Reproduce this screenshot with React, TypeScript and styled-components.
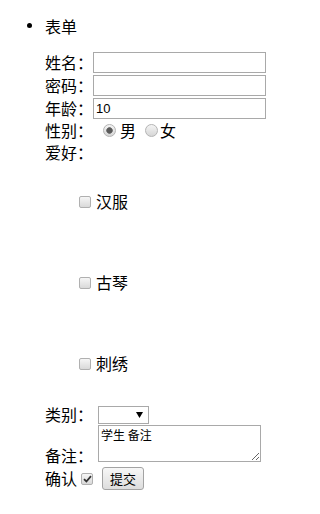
import React from "react";
import styled, { createGlobalStyle } from "styled-components";

const Global = createGlobalStyle`
  html, body { margin: 0; padding: 0; background: #fff; }
  body {
    font-family: "Noto Sans CJK SC", "Microsoft YaHei", sans-serif;
    font-size: 16px;
    color: #000;
  }
`;

const Page = styled.div`
  padding: 14px 0 24px 27px;
`;

const TitleRow = styled.div`
  display: flex;
  align-items: center;
  height: 23px;
  gap: 13px;
`;

const Bullet = styled.span`
  width: 5px;
  height: 5px;
  border-radius: 50%;
  background: #000;
  flex: none;
`;

const Form = styled.form`
  margin: 14px 0 0 18px;
  display: flex;
  flex-direction: column;
`;

const Row = styled.div<{ $h?: number; $align?: string }>`
  display: flex;
  align-items: ${(p) => p.$align || "center"};
  height: ${(p) => p.$h ?? 23}px;
  line-height: ${(p) => Math.min(p.$h ?? 23, 23)}px;
`;

const Label = styled.span`
  width: 48px;
  flex: none;
  white-space: nowrap;
  line-height: inherit;
`;

const TextInput = styled.input`
  box-sizing: border-box;
  width: 173px;
  height: 21px;
  border: 1px solid #a9a9a9;
  padding: 1px 2px;
  margin: 0;
  font-family: "Liberation Sans", Arial, sans-serif;
  font-size: 13px;
  color: #000;
  background: #fff;
  outline: none;
`;

const ChoiceGroup = styled.div<{ $pl?: number }>`
  display: flex;
  align-items: center;
  padding-left: ${(p) => p.$pl ?? 0}px;
`;

const Radio = styled.span<{ $checked?: boolean }>`
  box-sizing: border-box;
  width: 13px;
  height: 13px;
  border-radius: 50%;
  border: 1px solid #b4b4b4;
  background: ${(p) =>
    p.$checked
      ? "radial-gradient(circle, #5a5a5a 0 2.5px, #7a7a7a 3px, transparent 3.6px), linear-gradient(#f4f4f4, #d6d6d6)"
      : "linear-gradient(#f4f4f4, #d6d6d6)"};
  flex: none;
`;

const ChoiceText = styled.span<{ $ml?: number; $mr?: number }>`
  margin-left: ${(p) => p.$ml ?? 0}px;
  margin-right: ${(p) => p.$mr ?? 0}px;
  line-height: inherit;
`;

const Box = styled.span<{ $ml?: number }>`
  box-sizing: border-box;
  width: 12px;
  height: 12px;
  margin-left: ${(p) => p.$ml ?? 0}px;
  border: 1px solid #b0b0b0;
  border-radius: 2px;
  background: linear-gradient(#f6f6f6, #d9d9d9);
  flex: none;
  display: flex;
  align-items: center;
  justify-content: center;
`;

const HobbyList = styled.div`
  display: flex;
  flex-direction: column;
  gap: 58px;
  padding: 27px 0 28px 34px;
`;

const HobbyItem = styled.label`
  display: flex;
  align-items: center;
  gap: 5px;
  height: 23px;
  line-height: 23px;
`;

const SelectBox = styled.div`
  box-sizing: border-box;
  width: 51px;
  height: 18px;
  margin-left: 5px;
  margin-top: 3px;
  border: 1px solid #a9a9a9;
  background: #fff;
  display: flex;
  align-items: center;
  justify-content: flex-end;
  padding-right: 5px;
`;

const Notes = styled.textarea`
  box-sizing: border-box;
  width: 163px;
  height: 37px;
  margin: 0 0 5px 5px;
  padding: 1px 2px;
  border: 1px solid #a9a9a9;
  font-family: "Noto Sans CJK SC", "Microsoft YaHei", sans-serif;
  font-size: 12px;
  line-height: 15px;
  color: #000;
  resize: both;
  outline: none;
`;

const ConfirmText = styled.span`
  line-height: 23px;
`;

const SubmitButton = styled.button`
  box-sizing: border-box;
  width: 42px;
  height: 23px;
  margin-left: 9px;
  padding: 0;
  border: 1px solid #a3a3a3;
  border-radius: 3px;
  background: linear-gradient(#f7f7f7, #dddddd);
  font-family: "Noto Sans CJK SC", "Microsoft YaHei", sans-serif;
  font-size: 13px;
  color: #000;
`;

const CheckMark = () => (
  <svg width="9" height="8" viewBox="0 0 9 8">
    <path d="M1 4.2 L3.4 6.5 L8 1.2" fill="none" stroke="#333" strokeWidth="1.8" />
  </svg>
);

const Arrow = () => (
  <svg width="7" height="6" viewBox="0 0 7 6">
    <path d="M0 0 H7 L3.5 6 Z" fill="#000" />
  </svg>
);

export default function App() {
  return (
    <>
      <Global />
      <Page>
        <TitleRow>
          <Bullet />
          <span>表单</span>
        </TitleRow>
        <Form onSubmit={(e) => e.preventDefault()}>
          <Row>
            <Label>姓名：</Label>
            <TextInput type="text" readOnly defaultValue="" />
          </Row>
          <Row>
            <Label>密码：</Label>
            <TextInput type="password" readOnly defaultValue="" />
          </Row>
          <Row>
            <Label>年龄：</Label>
            <TextInput type="text" readOnly defaultValue="10" />
          </Row>
          <Row $h={21}>
            <Label>性别：</Label>
            <ChoiceGroup $pl={10}>
              <Radio $checked />
              <ChoiceText $ml={4} $mr={9}>男</ChoiceText>
              <Radio />
              <ChoiceText $ml={2}>女</ChoiceText>
            </ChoiceGroup>
          </Row>
          <Row $h={22}>
            <Label>爱好：</Label>
          </Row>
          <HobbyList>
            <HobbyItem>
              <Box />
              <span>汉服</span>
            </HobbyItem>
            <HobbyItem>
              <Box />
              <span>古琴</span>
            </HobbyItem>
            <HobbyItem>
              <Box />
              <span>刺绣</span>
            </HobbyItem>
          </HobbyList>
          <Row $align="flex-start">
            <Label>类别：</Label>
            <SelectBox>
              <Arrow />
            </SelectBox>
          </Row>
          <Row $h={41} $align="flex-end">
            <Label>备注：</Label>
            <Notes readOnly defaultValue="学生 备注" />
          </Row>
          <Row>
            <ConfirmText>确认</ConfirmText>
            <Box $ml={4}>
              <CheckMark />
            </Box>
            <SubmitButton type="submit">提交</SubmitButton>
          </Row>
        </Form>
      </Page>
    </>
  );
}
